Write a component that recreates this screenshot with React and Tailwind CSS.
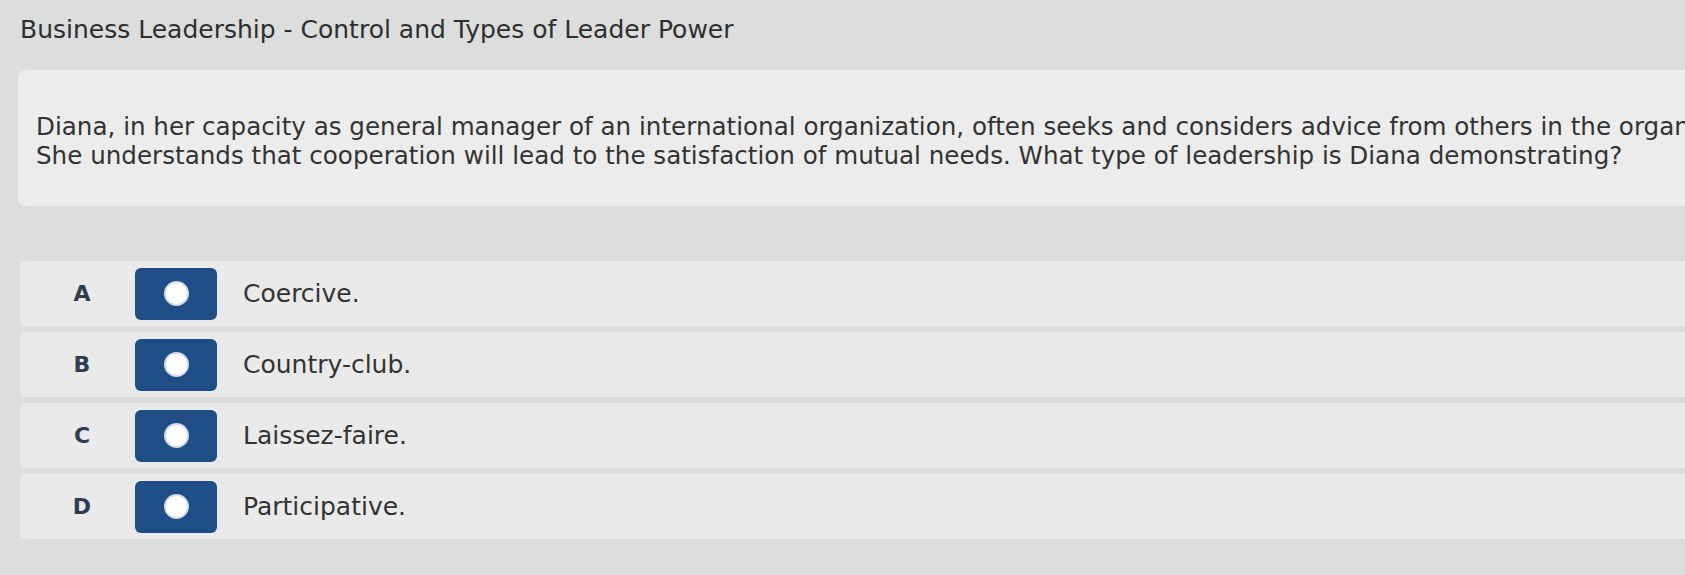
const options = [
  { key: 'A', text: 'Coercive.' },
  { key: 'B', text: 'Country-club.' },
  { key: 'C', text: 'Laissez-faire.' },
  { key: 'D', text: 'Participative.' },
];

function Radio() {
  return (
    <div className="flex h-[52px] w-[82px] shrink-0 items-center justify-center rounded-md bg-[#1f4e87]">
      <span className="h-[25px] w-[25px] rounded-full border-2 border-[#d6dde7] bg-white" />
    </div>
  );
}

export default function App() {
  return (
    <div
      className="h-[575px] w-full overflow-hidden bg-[#dcdddd] text-[#333333]"
      style={{ fontFamily: '"DejaVu Sans", Verdana, sans-serif' }}
    >
      {/* Title */}
      <h1 className="whitespace-nowrap pl-[20px] pt-[16px] text-[25px] leading-[28px] font-normal text-[#2f2f2f]">
        Business Leadership - Control and Types of Leader Power
      </h1>

      {/* Question card */}
      <div className="ml-[18px] mt-[26px] w-[1720px] rounded-l-lg bg-[#ececec] pb-[36px] pl-[18px] pt-[42px]">
        <p className="whitespace-nowrap text-[24.6px] leading-[29px]">
          Diana, in her capacity as general manager of an international organization, often seeks and considers advice from others in the organization.
        </p>
        <p className="whitespace-nowrap text-[24.6px] leading-[29px]">
          She understands that cooperation will lead to the satisfaction of mutual needs. What type of leadership is Diana demonstrating?
        </p>
      </div>

      {/* Answers */}
      <div className="ml-[20px] mt-[55px] flex flex-col gap-[6px]">
        {options.map(({ key, text }) => (
          <div key={key} className="flex h-[65px] items-center rounded-l-md bg-[#eaeaea]">
            <span className="w-[115px] pl-[9px] text-center text-[22px] font-bold text-[#2f3b50]">{key}</span>
            <Radio />
            <span className="ml-[26px] whitespace-nowrap text-[25px]">{text}</span>
          </div>
        ))}
      </div>
    </div>
  );
}
